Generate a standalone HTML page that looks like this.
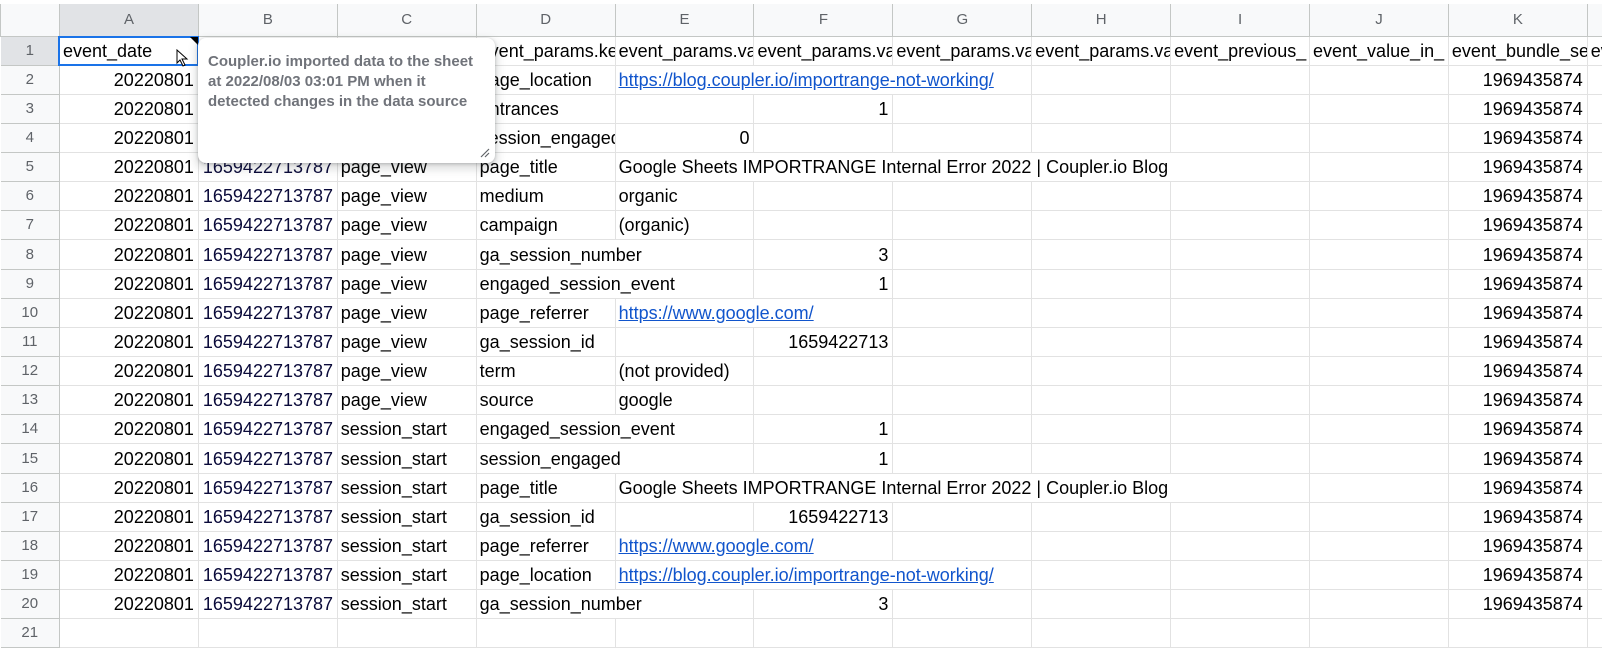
<!DOCTYPE html>
<html><head><meta charset="utf-8"><style>
*{box-sizing:border-box;margin:0;padding:0}
body{width:1602px;height:619px;overflow:hidden;background:#fff;font-family:"Liberation Sans",Arial,sans-serif;position:relative}
table{position:absolute;left:0;top:4px;border-collapse:collapse;table-layout:fixed;width:1662px}
td{border:1px solid #e2e2e2;font-size:18px;color:#000;white-space:nowrap;overflow:hidden;padding:0 4px 0 3px;height:29.15px;vertical-align:bottom;padding-bottom:3px;line-height:22px}
tr.h td{background:#f8f9fa;color:#5f6368;font-size:15px;text-align:center;height:32px;vertical-align:middle;padding:0;border-color:#c4c7c5;border-top:none}
td.rn{background:#f8f9fa;color:#5f6368;font-size:15px;text-align:center;vertical-align:middle;padding:0;border-color:#c4c7c5;border-left:none}
tr.h td.sel,td.rn.sel{background:#e1e3e6}
.r{text-align:right}
.b{color:#0a0a3a;padding-left:4px;padding-right:0;text-overflow:clip}
a{color:#1155cc;text-decoration:underline}
#tip{position:absolute;left:198px;top:38px;width:297px;height:125px;background:#fff;border-radius:8px;box-shadow:0 1px 3px rgba(60,64,67,.3),0 4px 8px 3px rgba(60,64,67,.15);padding:14px 10px;font-size:15px;font-weight:bold;color:#70737a;line-height:20px;white-space:nowrap}
#sel{position:absolute;left:58px;top:36px;width:141px;height:30px;border:2px solid #1a73e8}
</style></head><body>
<table>
<colgroup><col style="width:59px"><col style="width:138.9px"><col style="width:138.9px"><col style="width:138.9px"><col style="width:138.9px"><col style="width:138.9px"><col style="width:138.9px"><col style="width:138.9px"><col style="width:138.9px"><col style="width:138.9px"><col style="width:138.9px"><col style="width:138.9px"><col style="width:75px"></colgroup>
<tr class="h"><td></td><td class="sel">A</td><td>B</td><td>C</td><td>D</td><td>E</td><td>F</td><td>G</td><td>H</td><td>I</td><td>J</td><td>K</td><td>L</td></tr>
<tr><td class="rn sel">1</td><td>event_date</td><td>event_timestamp</td><td>event_name</td><td>event_params.key</td><td>event_params.va</td><td>event_params.va</td><td>event_params.va</td><td>event_params.va</td><td>event_previous_</td><td>event_value_in_</td><td>event_bundle_se</td><td>event</td></tr>
<tr><td class="rn">2</td><td class="r">20220801</td><td class="b">1659422713787</td><td>page_view</td><td>page_location</td><td colspan="3"><a>https://blog.coupler.io/importrange-not-working/</a></td><td></td><td></td><td></td><td class="r">1969435874</td><td></td></tr>
<tr><td class="rn">3</td><td class="r">20220801</td><td class="b">1659422713787</td><td>page_view</td><td>entrances</td><td></td><td class="r">1</td><td></td><td></td><td></td><td></td><td class="r">1969435874</td><td></td></tr>
<tr><td class="rn">4</td><td class="r">20220801</td><td class="b">1659422713787</td><td>page_view</td><td>session_engaged</td><td class="r">0</td><td></td><td></td><td></td><td></td><td></td><td class="r">1969435874</td><td></td></tr>
<tr><td class="rn">5</td><td class="r">20220801</td><td class="b">1659422713787</td><td>page_view</td><td>page_title</td><td colspan="5">Google Sheets IMPORTRANGE Internal Error 2022 | Coupler.io Blog</td><td></td><td class="r">1969435874</td><td></td></tr>
<tr><td class="rn">6</td><td class="r">20220801</td><td class="b">1659422713787</td><td>page_view</td><td>medium</td><td>organic</td><td></td><td></td><td></td><td></td><td></td><td class="r">1969435874</td><td></td></tr>
<tr><td class="rn">7</td><td class="r">20220801</td><td class="b">1659422713787</td><td>page_view</td><td>campaign</td><td>(organic)</td><td></td><td></td><td></td><td></td><td></td><td class="r">1969435874</td><td></td></tr>
<tr><td class="rn">8</td><td class="r">20220801</td><td class="b">1659422713787</td><td>page_view</td><td colspan="2">ga_session_number</td><td class="r">3</td><td></td><td></td><td></td><td></td><td class="r">1969435874</td><td></td></tr>
<tr><td class="rn">9</td><td class="r">20220801</td><td class="b">1659422713787</td><td>page_view</td><td colspan="2">engaged_session_event</td><td class="r">1</td><td></td><td></td><td></td><td></td><td class="r">1969435874</td><td></td></tr>
<tr><td class="rn">10</td><td class="r">20220801</td><td class="b">1659422713787</td><td>page_view</td><td>page_referrer</td><td colspan="2"><a>https://www.google.com/</a></td><td></td><td></td><td></td><td></td><td class="r">1969435874</td><td></td></tr>
<tr><td class="rn">11</td><td class="r">20220801</td><td class="b">1659422713787</td><td>page_view</td><td>ga_session_id</td><td></td><td class="r">1659422713</td><td></td><td></td><td></td><td></td><td class="r">1969435874</td><td></td></tr>
<tr><td class="rn">12</td><td class="r">20220801</td><td class="b">1659422713787</td><td>page_view</td><td>term</td><td>(not provided)</td><td></td><td></td><td></td><td></td><td></td><td class="r">1969435874</td><td></td></tr>
<tr><td class="rn">13</td><td class="r">20220801</td><td class="b">1659422713787</td><td>page_view</td><td>source</td><td>google</td><td></td><td></td><td></td><td></td><td></td><td class="r">1969435874</td><td></td></tr>
<tr><td class="rn">14</td><td class="r">20220801</td><td class="b">1659422713787</td><td>session_start</td><td colspan="2">engaged_session_event</td><td class="r">1</td><td></td><td></td><td></td><td></td><td class="r">1969435874</td><td></td></tr>
<tr><td class="rn">15</td><td class="r">20220801</td><td class="b">1659422713787</td><td>session_start</td><td colspan="2">session_engaged</td><td class="r">1</td><td></td><td></td><td></td><td></td><td class="r">1969435874</td><td></td></tr>
<tr><td class="rn">16</td><td class="r">20220801</td><td class="b">1659422713787</td><td>session_start</td><td>page_title</td><td colspan="5">Google Sheets IMPORTRANGE Internal Error 2022 | Coupler.io Blog</td><td></td><td class="r">1969435874</td><td></td></tr>
<tr><td class="rn">17</td><td class="r">20220801</td><td class="b">1659422713787</td><td>session_start</td><td>ga_session_id</td><td></td><td class="r">1659422713</td><td></td><td></td><td></td><td></td><td class="r">1969435874</td><td></td></tr>
<tr><td class="rn">18</td><td class="r">20220801</td><td class="b">1659422713787</td><td>session_start</td><td>page_referrer</td><td colspan="2"><a>https://www.google.com/</a></td><td></td><td></td><td></td><td></td><td class="r">1969435874</td><td></td></tr>
<tr><td class="rn">19</td><td class="r">20220801</td><td class="b">1659422713787</td><td>session_start</td><td>page_location</td><td colspan="3"><a>https://blog.coupler.io/importrange-not-working/</a></td><td></td><td></td><td></td><td class="r">1969435874</td><td></td></tr>
<tr><td class="rn">20</td><td class="r">20220801</td><td class="b">1659422713787</td><td>session_start</td><td colspan="2">ga_session_number</td><td class="r">3</td><td></td><td></td><td></td><td></td><td class="r">1969435874</td><td></td></tr>
<tr><td class="rn">21</td><td></td><td></td><td></td><td></td><td></td><td></td><td></td><td></td><td></td><td></td><td></td><td></td></tr>
</table>
<div id="sel"></div>
<svg style="position:absolute;left:189px;top:37px" width="9" height="9"><polygon points="1,0 9,0 9,8" fill="#000"/></svg>
<svg style="position:absolute;left:176px;top:49px" width="14" height="18"><path d="M1 1 L1 14 L4 11 L7 17 L9 16 L6 10 L11 10 Z" fill="#fff" stroke="#000" stroke-width="1"/></svg>
<div id="tip">Coupler.io imported data to the sheet<br>at 2022/08/03 03:01 PM when it<br>detected changes in the data source
<svg style="position:absolute;right:5px;bottom:5px" width="10" height="10"><path d="M1 9 L9 1 M5 9 L9 5" stroke="#5f6368" stroke-width="1.2"/></svg></div>
</body></html>
